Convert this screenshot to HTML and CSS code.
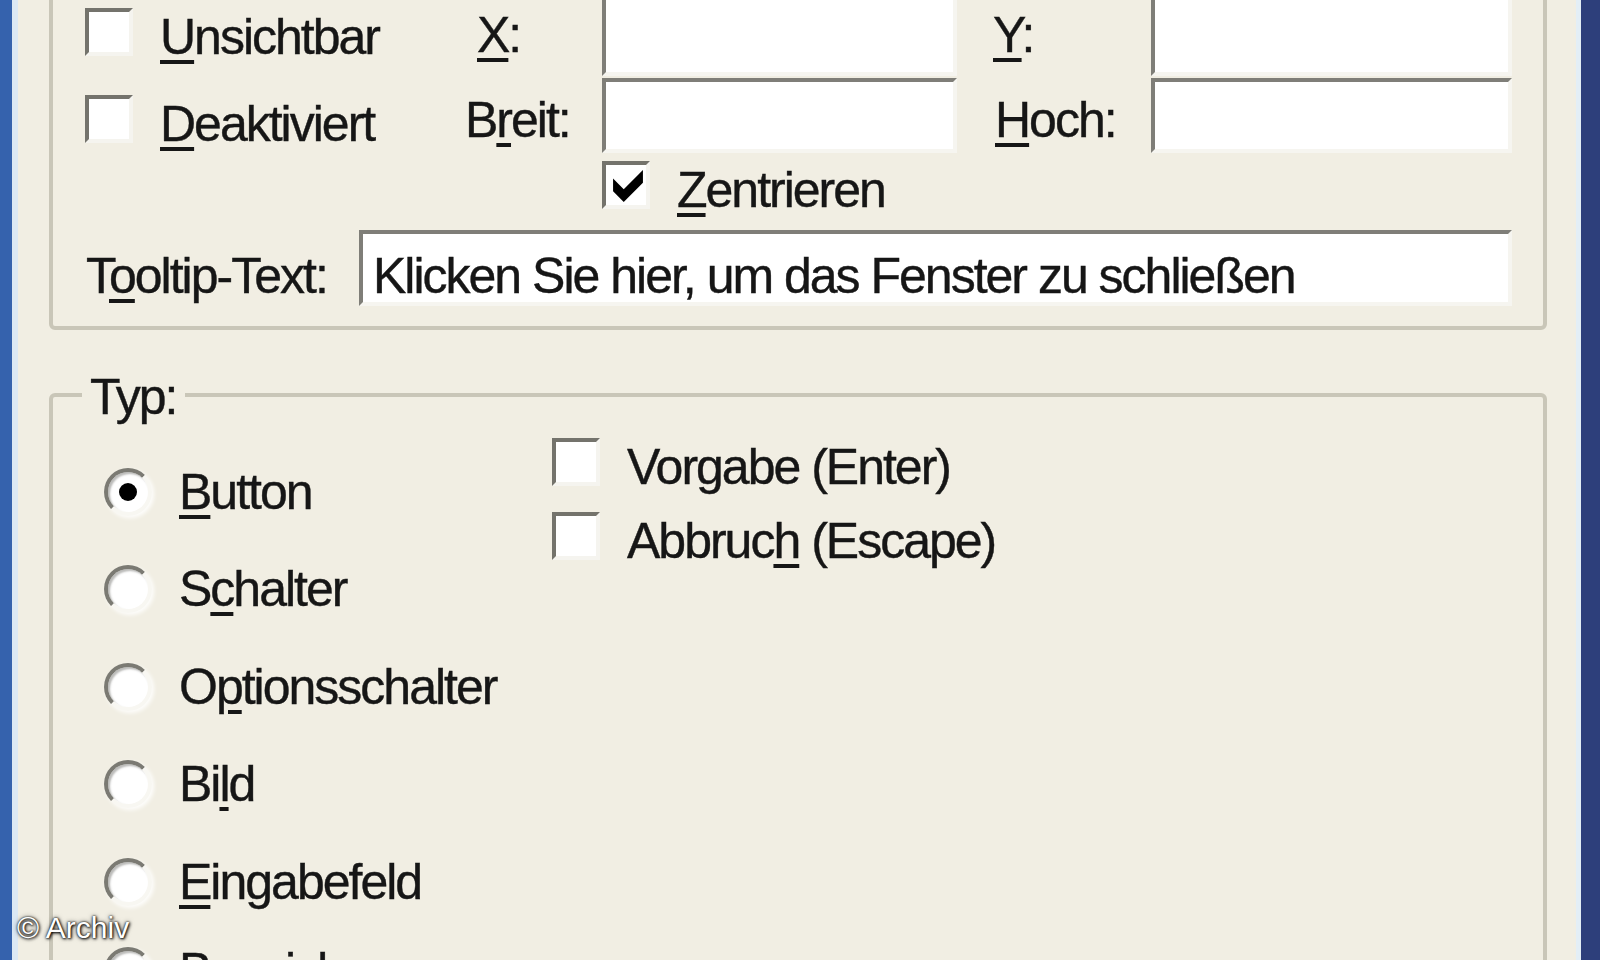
FILE: index.html
```html
<!DOCTYPE html>
<html lang="de">
<head>
<meta charset="utf-8">
<title>Eigenschaften</title>
<link rel="stylesheet" href="styles.css">
</head>
<body>
<div class="frame">
  <div class="client">
    <div class="group group-top">
      <div class="grid">
        <div class="chk-item c-unsichtbar"><span class="chk"></span><span class="lbl"><u>U</u>nsichtbar</span></div>
        <div class="fl x-lbl"><span class="txt"><u>X</u>:</span></div>
        <div class="field f-x"></div>
        <div class="fl y-lbl"><span class="txt"><u>Y</u>:</span></div>
        <div class="field f-y"></div>

        <div class="chk-item c-deakt"><span class="chk"></span><span class="lbl"><u>D</u>eaktiviert</span></div>
        <div class="fl b-lbl"><span class="txt shift">B<u>r</u>eit:</span></div>
        <div class="field f-b"></div>
        <div class="fl h-lbl"><span class="txt shift"><u>H</u>och:</span></div>
        <div class="field f-h"></div>

        <div class="chk-item c-zentr"><span class="chk"><svg class="tick" viewBox="0 0 7 7.5" width="30" height="32"><polygon points="0,2 2.5,4.5 7,0 7,3 2.5,7.5 0,5" fill="#000"/></svg></span><span class="lbl"><u>Z</u>entrieren</span></div>

        <div class="fl t-lbl"><span class="txt shift2">T<u>o</u>oltip-Text:</span></div>
        <div class="field f-t"><span class="txt shift2">Klicken Sie hier, um das Fenster zu schließen</span></div>
      </div>
    </div>

    <fieldset class="group group-typ">
      <legend class="legend">Typ:</legend>
      <div class="typ-body">
        <div class="radios">
          <div class="radio-item"><span class="radio on"></span><span class="txt"><u>B</u>utton</span></div>
          <div class="radio-item"><span class="radio"></span><span class="txt">S<u>c</u>halter</span></div>
          <div class="radio-item"><span class="radio"></span><span class="txt">O<u>p</u>tionsschalter</span></div>
          <div class="radio-item"><span class="radio"></span><span class="txt">Bi<u>l</u>d</span></div>
          <div class="radio-item"><span class="radio"></span><span class="txt"><u>E</u>ingabefeld</span></div>
          <div class="radio-item"><span class="radio"></span><span class="txt">Bezeichnung</span></div>
        </div>
        <div class="checks">
          <div class="chk-item"><span class="chk"></span><span class="lbl">Vorgabe (Enter)</span></div>
          <div class="chk-item"><span class="chk"></span><span class="lbl">Abbruc<u>h</u> (Escape)</span></div>
        </div>
      </div>
    </fieldset>
  </div>
  <div class="watermark">© Archiv</div>
</div>
</body>
</html>
```
FILE: styles.css
```css
* { box-sizing: border-box; }
html, body { margin: 0; padding: 0; }
body {
  width: 1600px;
  height: 960px;
  overflow: hidden;
  background: #f1eee3;
  font-family: "Liberation Sans", Arial, sans-serif;
  font-size: 50px;
  letter-spacing: -2px;
  color: #161616;
}
u {
  text-decoration-thickness: 4px;
  text-underline-offset: 6px;
}
.frame {
  position: relative;
  display: flex;
  width: 1600px;
  height: 960px;
  overflow: hidden;
  border-left: 12px solid #3562ad;
  border-right: 19px solid #2d3f7b;
}
.client {
  flex: 1;
  display: flex;
  flex-direction: column;
  border-left: 6px solid #dbe8f4;
  border-right: 5px solid #e3eef6;
  padding: 0 29px 0 31px;
  background: #f1eee3;
}
.group {
  border: 4px solid #c9c6b8;
  border-radius: 6px;
}
.group-top {
  margin-top: -60px;
  padding: 50px 0 20px;
  flex: none;
}
.grid {
  display: grid;
  grid-template-columns: 306px 243px 355px 194px 361px 1fr;
  grid-template-rows: 82px 75px 73px 76px;
  row-gap: 2px;
}
.txt, .lbl, .legend { white-space: nowrap; -webkit-text-stroke: 0.4px #161616; }
.fl { display: flex; align-items: center; }
.shift { padding-top: 9px; }
.shift2 { padding-top: 16px; }

.chk-item {
  display: flex;
  align-items: center;
  gap: 27px;
  height: 48px;
}
.chk-item .lbl { padding-top: 9px; }
.chk {
  flex: none;
  width: 48px;
  height: 48px;
  display: flex;
  align-items: center;
  justify-content: center;
  background: #fff;
  border: 4px solid;
  border-color: #74736c #f5f4ef #f5f4ef #74736c;
}
.tick { margin: 2px 0 0 3px; }
.c-unsichtbar { grid-column: 1; grid-row: 1; align-self: start; margin-top: 14px; padding-left: 32px; }
.c-deakt { grid-column: 1; grid-row: 2; align-self: start; margin-top: 17px; padding-left: 32px; }
.c-zentr { grid-column: 3 / span 3; grid-row: 3; align-self: start; margin-top: 6px; }

.x-lbl { grid-column: 2; grid-row: 1; padding-left: 118px; }
.b-lbl { grid-column: 2; grid-row: 2; padding-left: 106px; }
.y-lbl { grid-column: 4; grid-row: 1; padding-left: 36px; }
.h-lbl { grid-column: 4; grid-row: 2; padding-left: 38px; }
.t-lbl { grid-column: 1; grid-row: 4; padding-left: 33px; }

.field {
  display: flex;
  align-items: center;
  background: #fff;
  border: 4px solid;
  border-color: #7f7e78 #f6f5f0 #f6f5f0 #7f7e78;
}
.f-x { grid-column: 3; grid-row: 1; }
.f-y { grid-column: 5; grid-row: 1; }
.f-b { grid-column: 3; grid-row: 2; }
.f-h { grid-column: 5; grid-row: 2; }
.f-t { grid-column: 2 / span 4; grid-row: 4; padding-left: 10px; }

.group-typ {
  margin: 32px 0 0;
  padding: 0;
  min-width: 0;
  height: 720px;
  flex: none;
}
.legend {
  margin-left: 29px;
  padding: 4px 9px 0 8px;
  line-height: 62px;
}
.typ-body { display: flex; }
.radios {
  flex: none;
  width: 499px;
  padding: 15px 0 0 51px;
}
.radio-item {
  display: flex;
  align-items: center;
  gap: 27px;
  height: 97.5px;
}
.radio-item:last-child { height: 80px; }
.radio {
  flex: none;
  width: 48px;
  height: 48px;
  border-radius: 50%;
  display: flex;
  align-items: center;
  justify-content: center;
  background: #fff;
  border: 4px solid;
  border-color: #7b7a73 #f8f7f2 #f8f7f2 #7b7a73;
  box-shadow: inset 2px 2px 2px rgba(60, 60, 55, 0.35), 2px 2px 4px rgba(255, 255, 255, 0.9);
}
.radio.on::after {
  content: "";
  width: 18px;
  height: 18px;
  border-radius: 50%;
  background: #000;
}
.checks {
  display: flex;
  flex-direction: column;
  gap: 26px;
  padding-top: 10px;
}
.watermark {
  position: absolute;
  left: 5px;
  top: 913px;
  font-size: 30px;
  line-height: 30px;
  letter-spacing: 0;
  color: #fff;
  text-shadow: 0 0 2px #000, 1px 1px 3px #000, 0 0 5px rgba(0, 0, 0, 0.6);
}
```
